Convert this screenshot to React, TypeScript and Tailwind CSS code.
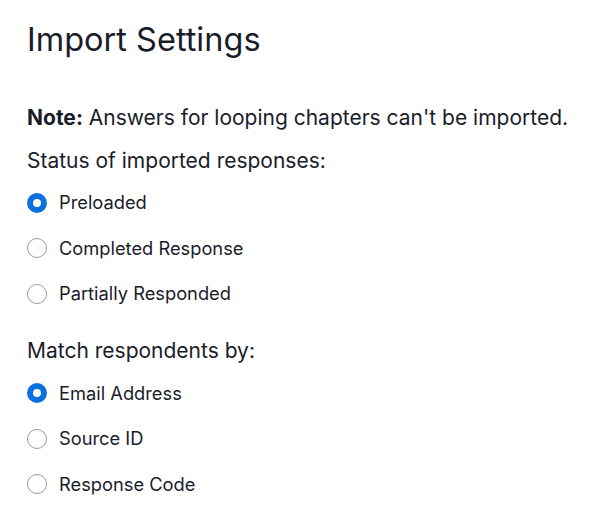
import React from 'react';

interface RadioRowProps {
    label: string;
    checked?: boolean;
}

const RadioRow: React.FC<RadioRowProps> = ({ label, checked }) => (
    <label className="flex items-center h-[45.5px] gap-[12px]">
        {checked ? (
            <span className="w-[20px] h-[20px] rounded-full border-[6px] border-[#0b6fde] bg-white shrink-0" />
        ) : (
            <span className="w-[20px] h-[20px] rounded-full border border-[#9a9a9a] bg-white shrink-0" />
        )}
        <span className="text-[18.3px] text-[#1b1c2a]">{label}</span>
    </label>
);

const App: React.FC = () => {
    return (
        <div className="w-[597px] h-[524px] bg-white px-[27px] pt-[20px] font-['Inter','Noto_Sans',sans-serif] text-[#1b1c2a]">
            <h1 className="text-[32.5px] leading-[40px]">Import Settings</h1>
            <p className="mt-[44px] text-[21px] leading-[28px]">
                <span className="font-bold">Note:</span> Answers for looping chapters can't be imported.
            </p>
            <p className="mt-[15px] text-[21px] leading-[28px]">Status of imported responses:</p>
            <div className="mt-[5px]">
                <RadioRow label="Preloaded" checked />
                <RadioRow label="Completed Response" />
                <RadioRow label="Partially Responded" />
            </div>
            <p className="mt-[20px] text-[21px] leading-[28px]">Match respondents by:</p>
            <div className="mt-[6px]">
                <RadioRow label="Email Address" checked />
                <RadioRow label="Source ID" />
                <RadioRow label="Response Code" />
            </div>
        </div>
    );
};

export default App;
